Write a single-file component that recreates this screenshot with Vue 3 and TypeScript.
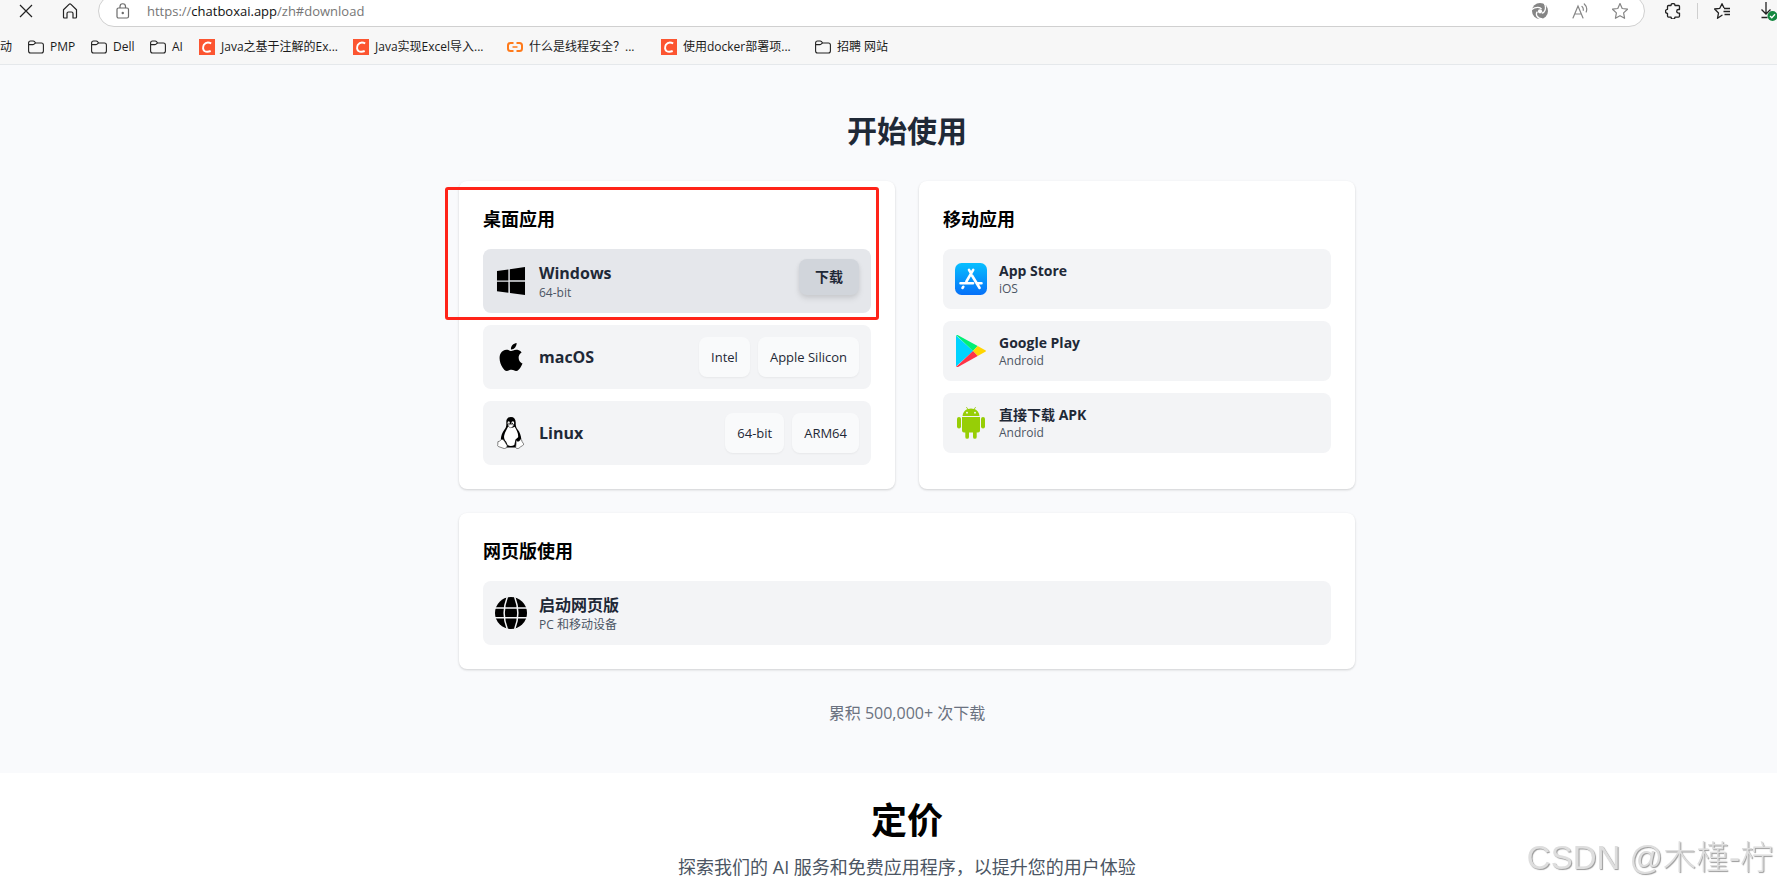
<script setup lang="ts">
interface Bookmark {
  icon: 'none' | 'folder' | 'csdn' | 'aliyun'
  label: string
}

interface DesktopApp {
  id: 'macos' | 'linux'
  name: string
  builds: string[]
}

interface MobileApp {
  id: 'appstore' | 'play' | 'apk'
  name: string
  platform: string
}

const bookmarks: Bookmark[] = [
  { icon: 'none', label: '动' },
  { icon: 'folder', label: 'PMP' },
  { icon: 'folder', label: 'Dell' },
  { icon: 'folder', label: 'AI' },
  { icon: 'csdn', label: 'Java之基于注解的Ex...' },
  { icon: 'csdn', label: 'Java实现Excel导入...' },
  { icon: 'aliyun', label: '什么是线程安全？...' },
  { icon: 'csdn', label: '使用docker部署项...' },
  { icon: 'folder', label: '招聘 网站' },
]

const desktopApps: DesktopApp[] = [
  { id: 'macos', name: 'macOS', builds: ['Intel', 'Apple Silicon'] },
  { id: 'linux', name: 'Linux', builds: ['64-bit', 'ARM64'] },
]

const mobileApps: MobileApp[] = [
  { id: 'appstore', name: 'App Store', platform: 'iOS' },
  { id: 'play', name: 'Google Play', platform: 'Android' },
  { id: 'apk', name: '直接下载 APK', platform: 'Android' },
]
</script>

<template>
  <div class="page">
    <header class="browser">
      <div class="toolbar">
        <button class="tool" type="button" aria-label="停止">
          <svg width="16" height="16" viewBox="0 0 16 16" fill="none" stroke="#222" stroke-width="1.2">
            <path d="M2 2l12 12M14 2L2 14" />
          </svg>
        </button>
        <button class="tool" type="button" aria-label="主页">
          <svg width="16" height="16" viewBox="0 0 16 16" fill="none" stroke="#222" stroke-width="1.2" stroke-linejoin="round">
            <path d="M1.5 6.8L7 1.4q1-.9 2 0l5.500 5.400v7.200q0 1-1 1h-2.500v-4.500q0-1.500-1.500-1.500h-3q-1.500 0-1.500 1.500V15H2.500q-1 0-1-1z" />
          </svg>
        </button>
        <div class="address">
          <svg width="16" height="16" viewBox="0 0 16 16" fill="none" stroke="#6b6b6b" stroke-width="1.2">
            <rect x="2" y="5" width="11.500" height="10" rx="1.500" />
            <path d="M5 5V3.500a2.750 2.750 0 0 1 5.500 0V5" />
            <circle cx="7.750" cy="10" r=".6" fill="#6b6b6b" />
          </svg>
          <div class="url" role="textbox" aria-label="地址栏" contenteditable="true" spellcheck="false">https://<span class="host">chatboxai.app</span>/zh#download</div>
          <button class="tool-in" type="button" aria-label="同步">
            <svg width="16" height="16" viewBox="0 0 16 16">
              <circle cx="8" cy="8" r="8" fill="#858585" />
              <path d="M-.2 6.500C3.500 3.200 9 4 9.400 6.200M12.500.8C15 6 12 10.600 9.800 9.900M10.500 16C4.800 15.600 3.300 11 5.300 8.700" fill="none" stroke="#fff" stroke-width="1.300" />
              <circle cx="8" cy="8.300" r="2.100" fill="#fff" />
            </svg>
          </button>
          <button class="tool-in" type="button" aria-label="朗读">
            <svg width="16" height="16" viewBox="0 0 16 16" fill="none" stroke="#858585" stroke-width="1.200" stroke-linecap="round">
              <path d="M1 15L6 3L11 15M2.900 11h6.300M10 3.500q1.700 1.500 1.200 3.800M12.300 1q3.600 3.300 1.900 8" />
            </svg>
          </button>
          <button class="tool-in" type="button" aria-label="收藏此页">
            <svg width="16" height="16" viewBox="0 0 16 16" fill="none" stroke="#858585" stroke-width="1.200" stroke-linejoin="round">
              <path d="M8 .6l2.200 4.900 5.300.7-3.900 3.700 1 5.400L8 12.700 3.400 15.300l1-5.400L.5 6.200l5.300-.7z" />
            </svg>
          </button>
        </div>
        <div class="actions">
          <button class="tool-in" type="button" aria-label="扩展">
            <svg width="16" height="16" viewBox="0 0 16 16" fill="none" stroke="#222" stroke-width="1.300" stroke-linejoin="round">
              <path d="M3.500 2.500H6a2 2 0 0 1 4 0h3.500q1 0 1 1v3h-1a1.800 1.800 0 0 0 0 3.600h1v3q0 1-1 1H10a2 2 0 0 1-4 0H3.500q-1 0-1-1v-2.800a2 2 0 0 1 0-4V3.500q0-1 1-1z" />
            </svg>
          </button>
          <span class="divider"></span>
          <button class="tool-in" type="button" aria-label="收藏夹">
            <svg width="16" height="16" viewBox="0 0 16 16" fill="none" stroke="#222" stroke-width="1.300" stroke-linejoin="round">
              <path d="M8.500 12.500L8 12.200 3.500 15.300l1-5.300L.6 6l5.200-.7L8 .7l2 4.200M10 5.500h6M9.500 8.500H16M10.500 11.500H16" />
            </svg>
          </button>
          <button class="tool-in" type="button" aria-label="下载完成">
            <svg width="18" height="20" viewBox="0 0 18 20" fill="none" stroke="#222" stroke-width="1.300">
              <path d="M6 1v12M1.500 8.500L6 13l4.500-4.500M1.500 16.500h6" />
              <circle cx="12.500" cy="15" r="5" fill="#148840" stroke="none" />
              <path d="M10 15l1.800 1.800 3.200-3.500" stroke="#fff" />
            </svg>
          </button>
        </div>
      </div>

      <nav class="bookmarks" aria-label="收藏夹栏">
        <a v-for="item in bookmarks" :key="item.label" class="bookmark" href="#download">
          <svg v-if="item.icon === 'folder'" width="16" height="16" viewBox="0 0 16 16" fill="none" stroke="#222" stroke-width="1.100">
            <path d="M.6 4q0-2 2-2h2.600q.8 0 1.300.6L7.700 4h5.700q2 0 2 2v6q0 2-2 2H2.600q-2 0-2-2zM.6 5.600h4.200q.8 0 1.300-.5L7.500 4" />
          </svg>
          <svg v-else-if="item.icon === 'csdn'" width="16" height="16" viewBox="0 0 16 16">
            <path d="M0 0h16v16H0z" fill="#fc5531" />
            <path d="M12.200 4.300Q7.500 2 4.900 5.700Q3 9.800 5.400 12Q8 13.500 11.700 12" fill="none" stroke="#fff" stroke-width="1.900" />
          </svg>
          <svg v-else-if="item.icon === 'aliyun'" width="16" height="16" viewBox="0 0 16 16" fill="none" stroke="#ff7a1a" stroke-width="2">
            <path d="M6.500 4H3.500Q1 4 1 6.500v3Q1 12 3.500 12h3M9.500 4h3Q15 4 15 6.500v3q0 2.500-2.500 2.500h-3" />
            <path d="M5.500 8h5" stroke-width="1.500" />
          </svg>
          <span>{{ item.label }}</span>
        </a>
      </nav>
    </header>

    <main>
      <section id="download" class="download">
        <h1>开始使用</h1>
        <div class="cards">
          <section class="card">
            <h2>桌面应用</h2>
            <div class="rows">
              <div class="row row-active">
                <svg class="icon" viewBox="-1.7 -1.7 27.4 27.4">
                  <path d="M0 3.449L9.750 2.100v9.451H0m10.949-9.602L24 0v11.400H10.949M0 12.600h9.750v9.451L0 20.699M10.949 12.600H24V24l-12.900-1.801" />
                </svg>
                <div class="text">
                  <strong>Windows</strong>
                  <small>64-bit</small>
                </div>
                <button class="get" type="button">下载</button>
              </div>
              <div v-for="app in desktopApps" :key="app.id" class="row">
                <svg v-if="app.id === 'macos'" class="icon" viewBox="-1.7 -1.7 27.4 27.4">
                  <path d="M12.152 6.896c-.948 0-2.415-1.078-3.960-1.040-2.040.027-3.910 1.183-4.961 3.014-2.117 3.675-.546 9.103 1.519 12.090 1.013 1.454 2.208 3.090 3.792 3.039 1.520-.065 2.090-.987 3.935-.987 1.831 0 2.350.987 3.960.948 1.637-.026 2.676-1.480 3.676-2.948 1.156-1.688 1.636-3.325 1.662-3.415-.039-.013-3.182-1.221-3.220-4.857-.026-3.040 2.480-4.494 2.597-4.559-1.429-2.090-3.623-2.324-4.390-2.376-2-.156-3.675 1.090-4.610 1.090zM15.530 3.830c.843-1.012 1.400-2.427 1.245-3.830-1.207.052-2.662.805-3.532 1.818-.780.896-1.454 2.338-1.273 3.714 1.338.104 2.715-.688 3.559-1.701" />
                </svg>
                <svg v-else class="icon" viewBox="0 0 32 32">
                  <path d="M16 0C12.600 0 11.100 2.300 11.300 5.600c.2 3.400-.3 5-2 7.200C7.200 15.600 6 19 5.800 22.500L11 30.500h10l5.300-8.500c-.3-3.700-1.500-7-3.700-9.600-1.700-2.100-1.900-3.700-1.900-6.900C20.700 2 19 0 16 0z" />
                  <path d="M13.200 9.500c-1.200 2.900-3.300 5.400-4 9-.5 2.700.3 4.300 2 6.300l1.500 3.500q3.300 1.300 6.600-.3l1.200-5.500 2.600-2.200c.5-3.300-1.300-7-3.500-10.500q-3.200 2.400-6.400-.3z" fill="#fff" />
                  <ellipse cx="13.700" cy="6" rx="1.200" ry="1.700" fill="#fff" />
                  <ellipse cx="17.800" cy="6" rx="1.400" ry="1.800" fill="#fff" />
                  <circle cx="14" cy="6.300" r=".6" />
                  <circle cx="17.500" cy="6.300" r=".6" />
                  <path d="M13 8.500q2.700-2.300 5.600-.2-1.600 2.600-3 2.500-1.500-.2-2.600-2.300z" fill="#fff" stroke="#777" stroke-width=".5" />
                  <path d="M6.300 22.500q1.700-.8 3.200 1.700l2.600 4.300q.4 3-2.800 3.100l-6-2.100q-1.100-.5-.5-2.200l.1-2.600q1.800.1 3.400-2.200zM21 23.300q.7 1.500 2.600.9 1.600-.4 1.900-2.200 1.300.3 1.600 2.600l1.500 2.300q.4 1-1.200 1.800-2.300 1.200-3.500 2.600-2.200 1-3.300-.8.700-3.400.4-7.200z" fill="#fff" stroke="#333" stroke-width=".6" />
                </svg>
                <div class="text">
                  <strong>{{ app.name }}</strong>
                </div>
                <div class="builds">
                  <button v-for="build in app.builds" :key="build" class="build" type="button">{{ build }}</button>
                </div>
              </div>
            </div>
            <div class="marker" aria-hidden="true"></div>
          </section>

          <section class="card">
            <h2>移动应用</h2>
            <div class="rows">
              <a v-for="app in mobileApps" :key="app.id" class="row row-compact" href="#download">
                <svg v-if="app.id === 'appstore'" class="icon" viewBox="0 0 32 32">
                  <defs>
                    <linearGradient id="store-sky" x1="0" y1="0" x2="0" y2="1">
                      <stop offset="0" stop-color="#07bfff" />
                      <stop offset="1" stop-color="#0670f8" />
                    </linearGradient>
                  </defs>
                  <rect width="32" height="32" rx="6.500" fill="url(#store-sky)" />
                  <path d="M18.200 6.800L11.400 18.500M8.300 23.800L7.500 25M14 6.800l2.200 3.800M17 12.500L24.600 25M5.500 20.200h12.500M22.500 20.200h4" fill="none" stroke="#fff" stroke-width="2.600" stroke-linecap="round" />
                </svg>
                <svg v-else-if="app.id === 'play'" class="icon" viewBox="0 0 32 32">
                  <path d="M1 .5v31L18.200 16z" fill="#00d3ff" />
                  <path d="M1 0q1-.5 2 .2L22.700 11 18 16z" fill="#00ef76" />
                  <path d="M22.700 11l8 4.400q.7.600 0 1.200l-8 4.400L18 16z" fill="#ffd500" />
                  <path d="M18 16l4.700 5L3 31.900q-1 .5-2 0z" fill="#ff3347" />
                </svg>
                <svg v-else class="icon" viewBox="0 0 32 32" fill="#97ce06">
                  <path d="M7.500 9c.3-3.600 2.600-5.900 5-6.900L11 .4l.6-.4 1.700 2q2.700-.8 5.400 0l1.700-2 .6.400-1.500 1.700c2.400 1 4.700 3.300 5 6.900z" />
                  <path d="M7 10h18v13.500q0 2-2 2h-1.300V30a1.800 1.800 0 0 1-3.700 0v-4.500h-4V30a1.800 1.800 0 0 1-3.700 0v-4.500H9q-2 0-2-2z" />
                  <rect x="2" y="10" width="4" height="11.500" rx="2" />
                  <rect x="26" y="10" width="4" height="11.500" rx="2" />
                  <circle cx="12" cy="5.700" r=".9" fill="#fff" />
                  <circle cx="20" cy="5.700" r=".9" fill="#fff" />
                </svg>
                <div class="text">
                  <strong>{{ app.name }}</strong>
                  <small>{{ app.platform }}</small>
                </div>
              </a>
            </div>
          </section>

          <section class="card card-wide">
            <h2>网页版使用</h2>
            <div class="rows">
              <a class="row" href="#download">
                <svg class="icon" viewBox="0 0 32 32">
                  <circle cx="16" cy="16" r="16" />
                  <path d="M0 11h32M0 20.700h32M12.300 0Q6 16 12.300 32M19.700 0Q26 16 19.700 32" fill="none" stroke="#f3f4f6" stroke-width="1.500" />
                </svg>
                <div class="text">
                  <strong>启动网页版</strong>
                  <small>PC 和移动设备</small>
                </div>
              </a>
            </div>
          </section>
        </div>
        <p class="total">累积 500,000+ 次下载</p>
      </section>

      <section class="pricing">
        <h2>定价</h2>
        <p>探索我们的 AI 服务和免费应用程序，以提升您的用户体验</p>
      </section>
    </main>

    <div class="watermark">CSDN @木槿-柠</div>
  </div>
</template>

<style>
body {
  margin: 0;
  background: #fff;
}
</style>

<style scoped>
.page {
  font-family: "Open Sans", "Noto Sans CJK SC", sans-serif;
  color: #1f2937;
}

.page * {
  box-sizing: border-box;
}

h1,
h2,
p {
  margin: 0;
}

a {
  color: inherit;
  text-decoration: none;
}

button {
  border: 0;
  padding: 0;
  background: none;
  color: inherit;
  font-family: inherit;
  cursor: pointer;
}

svg {
  display: block;
  flex: none;
}

.browser {
  height: 65px;
  overflow: hidden;
  background: #f7f7f7;
  border-bottom: 1px solid #e5e8eb;
}

.toolbar {
  display: flex;
  align-items: center;
  height: 32px;
  margin-top: -5px;
  padding-left: 18px;
}

.tool {
  width: 44px;
}

.address {
  flex: 1;
  display: flex;
  align-items: center;
  height: 32px;
  margin-left: -8px;
  padding: 0 16px;
  border: 1px solid #d0d0d0;
  border-radius: 16px;
  background: #fff;
}

.url {
  flex: 1;
  margin-left: 16px;
  color: #767676;
  font-size: 13px;
  line-height: 20px;
  outline: none;
}

.host {
  color: #111;
}

.tool-in {
  flex: none;
}

.address .tool-in + .tool-in {
  margin-left: 24px;
}

.actions {
  display: flex;
  align-items: center;
  gap: 16px;
  width: 132px;
  padding-left: 20px;
}

.actions .tool-in:last-child {
  margin-left: 14px;
}

.divider {
  flex: none;
  width: 1px;
  height: 16px;
  background: #cfcfcf;
}

.bookmarks {
  display: grid;
  grid-template-columns: 28px 63px 59px 49px repeat(4, 154px) auto;
  align-items: center;
  height: 37px;
  padding-top: 3px;
  color: #1b1b1b;
  font-size: 12px;
  line-height: 16px;
  white-space: nowrap;
}

.bookmark {
  display: flex;
  align-items: center;
  gap: 6px;
}

.download {
  padding: 48px 0 48px 37px;
  background: #f9fafc;
}

h1 {
  margin-bottom: 32px;
  font-size: 30px;
  line-height: 36px;
  font-weight: 700;
  text-align: center;
}

.cards {
  display: grid;
  grid-template-columns: 1fr 1fr;
  gap: 24px;
  max-width: 896px;
  margin: 0 auto;
}

.card {
  position: relative;
  padding: 24px;
  border-radius: 8px;
  background: #fff;
  box-shadow: 0 1px 3px rgba(0, 0, 0, 0.1), 0 1px 2px rgba(0, 0, 0, 0.08);
}

.card-wide {
  grid-column: 1 / -1;
}

.card h2 {
  margin-bottom: 16px;
  color: #000;
  font-size: 18px;
  line-height: 28px;
  font-weight: 700;
}

.rows {
  display: flex;
  flex-direction: column;
  gap: 12px;
}

.row {
  display: flex;
  align-items: center;
  gap: 12px;
  min-height: 64px;
  padding: 10px 12px;
  border-radius: 8px;
  background: #f3f4f6;
}

.row-active {
  background: #e5e7eb;
}

.row-compact {
  min-height: 60px;
}

.icon {
  width: 32px;
  height: 32px;
}

.text {
  flex: 1;
  display: flex;
  flex-direction: column;
}

.text strong {
  font-size: 16px;
  line-height: 24px;
  font-weight: 700;
}

.row-compact strong {
  font-size: 14px;
  line-height: 20px;
}

.text small {
  color: #4b5563;
  font-size: 12px;
  line-height: 16px;
}

.get {
  align-self: flex-start;
  height: 36px;
  padding: 0 16px;
  border-radius: 8px;
  background: #d1d5db;
  box-shadow: 0 4px 6px rgba(0, 0, 0, 0.08), 0 2px 4px rgba(0, 0, 0, 0.06);
  font-size: 14px;
  line-height: 20px;
  font-weight: 600;
}

.builds {
  display: flex;
  gap: 8px;
}

.build {
  height: 40px;
  padding: 0 12px;
  border-radius: 8px;
  background: #f9fafb;
  box-shadow: 0 1px 2px rgba(0, 0, 0, 0.05);
  font-size: 13px;
  line-height: 16px;
}

.marker {
  position: absolute;
  top: 6px;
  right: 16px;
  left: -14px;
  height: 133px;
  border: 3px solid #ff2318;
  border-radius: 3px;
  pointer-events: none;
}

.total {
  margin-top: 32px;
  color: #6b7280;
  font-size: 16px;
  line-height: 24px;
  text-align: center;
}

.pricing {
  padding: 28px 0 0 37px;
  text-align: center;
}

.pricing h2 {
  color: #000;
  font-size: 36px;
  line-height: 40px;
  font-weight: 700;
}

.pricing p {
  margin-top: 12px;
  color: #4b5563;
  font-size: 18px;
  line-height: 28px;
}

.watermark {
  position: fixed;
  right: 4px;
  bottom: 6px;
  color: #dedede;
  font-family: "Liberation Sans", "Noto Sans CJK SC", sans-serif;
  font-size: 33px;
  font-weight: 300;
  line-height: 48px;
  text-shadow: 1px 1px 1px #999;
  pointer-events: none;
}
</style>
